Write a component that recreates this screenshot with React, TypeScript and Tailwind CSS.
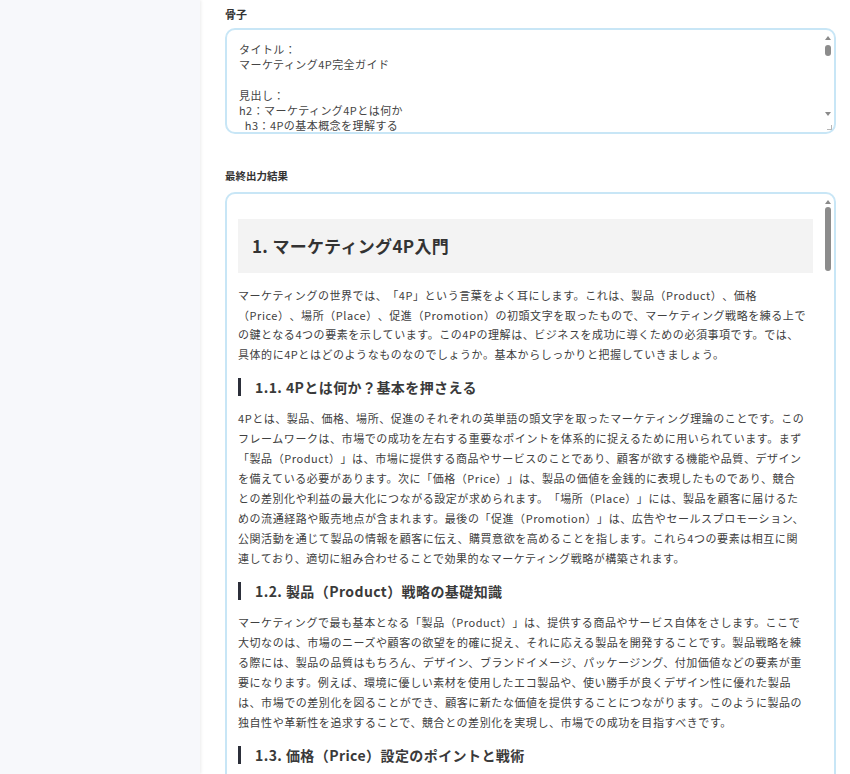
import React from 'react'

const FONT = '"Noto Sans CJK JP", "Noto Sans", sans-serif'

const outline = `タイトル：
マーケティング4P完全ガイド

見出し：
h2：マーケティング4Pとは何か
  h3：4Pの基本概念を理解する
  h3：製品（Product）戦略の基礎知識
  h3：価格（Price）設定のポイントと戦術
h2：場所（Place）とチャネル戦略
  h3：流通経路の設計
h2：促進（Promotion）の方法`

const intro = [
  'マーケティングの世界では、「4P」という言葉をよく耳にします。これは、製品（Product）、価格',
  '（Price）、場所（Place）、促進（Promotion）の初頭文字を取ったもので、マーケティング戦略を練る上で',
  'の鍵となる4つの要素を示しています。この4Pの理解は、ビジネスを成功に導くための必須事項です。では、',
  '具体的に4Pとはどのようなものなのでしょうか。基本からしっかりと把握していきましょう。',
]

const sections = [
  {
    title: '1.1. 4Pとは何か？基本を押さえる',
    lines: [
      '4Pとは、製品、価格、場所、促進のそれぞれの英単語の頭文字を取ったマーケティング理論のことです。この',
      'フレームワークは、市場での成功を左右する重要なポイントを体系的に捉えるために用いられています。まず',
      '「製品（Product）」は、市場に提供する商品やサービスのことであり、顧客が欲する機能や品質、デザイン',
      'を備えている必要があります。次に「価格（Price）」は、製品の価値を金銭的に表現したものであり、競合',
      'との差別化や利益の最大化につながる設定が求められます。「場所（Place）」には、製品を顧客に届けるた',
      'めの流通経路や販売地点が含まれます。最後の「促進（Promotion）」は、広告やセールスプロモーション、',
      '公関活動を通じて製品の情報を顧客に伝え、購買意欲を高めることを指します。これら4つの要素は相互に関',
      '連しており、適切に組み合わせることで効果的なマーケティング戦略が構築されます。',
    ],
  },
  {
    title: '1.2. 製品（Product）戦略の基礎知識',
    lines: [
      'マーケティングで最も基本となる「製品（Product）」は、提供する商品やサービス自体をさします。ここで',
      '大切なのは、市場のニーズや顧客の欲望を的確に捉え、それに応える製品を開発することです。製品戦略を練',
      'る際には、製品の品質はもちろん、デザイン、ブランドイメージ、パッケージング、付加価値などの要素が重',
      '要になります。例えば、環境に優しい素材を使用したエコ製品や、使い勝手が良くデザイン性に優れた製品',
      'は、市場での差別化を図ることができ、顧客に新たな価値を提供することにつながります。このように製品の',
      '独自性や革新性を追求することで、競合との差別化を実現し、市場での成功を目指すべきです。',
    ],
  },
  {
    title: '1.3. 価格（Price）設定のポイントと戦術',
    lines: [
      '価格は、製品の価値を顧客に伝える重要な要素であり、企業の利益にも直結します。価格設定では、コスト、',
      '競合の価格、顧客が感じる価値のバランスを考慮する必要があります。',
    ],
  },
]

function Lines({ lines, leading = 'leading-[20px]' }: { lines: string[]; leading?: string }) {
  return (
    <p className={`text-[11px] ${leading} text-[#404040] tracking-[0.05em] [text-spacing-trim:space-all]`}>
      {lines.map((l, i) => (
        <span key={i} className="block whitespace-nowrap">
          {l}
        </span>
      ))}
    </p>
  )
}

// classic scrollbar column, drawn in flow beside the content
function Scrollbar({
  thumbTop,
  thumbHeight,
  down,
  bottomPad = 'pb-[4px]',
}: {
  thumbTop: number
  thumbHeight: number
  down?: boolean
  bottomPad?: string
}) {
  return (
    <div className={`w-[12px] flex-shrink-0 flex flex-col items-center pt-[6px] ${bottomPad}`}>
      <span className="w-0 h-0 border-l-[3px] border-r-[3px] border-b-[4px] border-l-transparent border-r-transparent border-b-[#8a8a8a]" />
      <div style={{ height: thumbTop }} />
      <span className="w-[6px] rounded-full bg-[#8c8c8c]" style={{ height: thumbHeight }} />
      <div className="flex-1" />
      {down && (
        <span className="w-0 h-0 border-l-[3px] border-r-[3px] border-t-[4px] border-l-transparent border-r-transparent border-t-[#8a8a8a]" />
      )}
    </div>
  )
}

export default function App() {
  return (
    <div className="flex h-[774px] overflow-hidden bg-white" style={{ fontFamily: FONT }}>
      <aside className="w-[200px] flex-shrink-0 bg-[#f7f8fb] shadow-[1px_0_3px_rgba(0,0,0,0.08)]" />

      <main className="flex-1 pl-[25px] pr-[13px]">
        <div className="pt-[6px]">
          <label className="block text-[11px] font-bold text-[#333] leading-[16px]">骨子</label>
          <div className="relative mt-[6px] flex w-[611px] h-[106px] rounded-[10px] border-2 border-[#c8e6f6] bg-white overflow-hidden">
            <textarea
              readOnly
              value={outline}
              className="flex-1 resize-none overflow-hidden bg-transparent pl-[12px] pt-[12px] text-[11px] leading-[15.3px] tracking-[0.04em] text-[#444] outline-none whitespace-pre [text-spacing-trim:space-all]"
              style={{ fontFamily: FONT }}
            />
            <Scrollbar thumbTop={5} thumbHeight={11} down bottomPad="pb-[16px]" />
            <span className="absolute right-[2px] bottom-[2px] w-[5px] h-[5px] border-r border-b border-[#b5b5b5]" />
          </div>
        </div>

        <div className="mt-[34px]">
          <label className="block text-[10.5px] font-bold text-[#333] leading-[16px]">最終出力結果</label>
          <div className="mt-[8px] flex w-[611px] h-[700px] overflow-hidden rounded-[10px] border-2 border-[#c8e6f6] bg-white">
            <div className="w-[586px] pl-[11px] pt-[25px]">
              <h1 className="bg-[#f3f3f3] h-[54px] flex items-center px-[14px] text-[17px] font-bold text-[#333] tracking-[0.02em]">
                1. マーケティング4P入門
              </h1>
              <div className="mt-[13px]">
                <Lines lines={intro} leading="leading-[19.5px]" />
              </div>
              {sections.map((s) => (
                <section key={s.title} className="mt-[12px]">
                  <h2 className="flex items-center gap-[14px] h-[22px] text-[14px] font-bold text-[#3a3a3a] tracking-[0.03em] [text-spacing-trim:space-all]">
                    <span className="w-[3px] h-[18px] bg-[#2c2f3a]" />
                    {s.title}
                  </h2>
                  <div className="mt-[10px]">
                    <Lines lines={s.lines} />
                  </div>
                </section>
              ))}
            </div>
            <div className="flex-1" />
            <Scrollbar thumbTop={3} thumbHeight={64} />
          </div>
        </div>
      </main>
    </div>
  )
}
